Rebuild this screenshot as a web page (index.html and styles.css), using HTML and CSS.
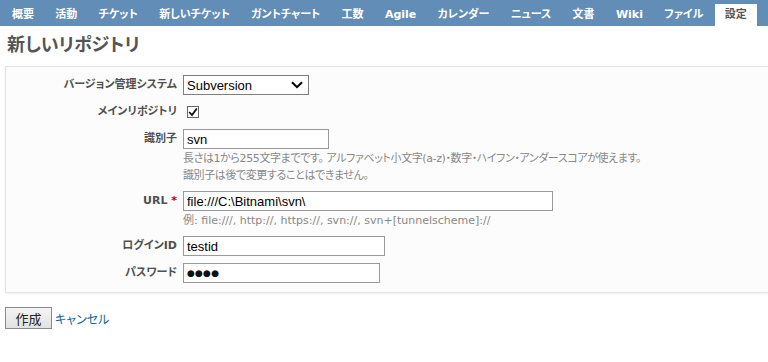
FILE: index.html
```html
<!DOCTYPE html>
<html lang="ja">
<head>
<meta charset="utf-8">
<title>新しいリポジトリ</title>
<link rel="stylesheet" href="styles.css">
</head>
<body>
<div class="main-menu">
  <ul class="tabs">
    <li><a href="#">概要</a></li>
    <li><a href="#">活動</a></li>
    <li><a href="#">チケット</a></li>
    <li><a href="#">新しいチケット</a></li>
    <li><a href="#">ガントチャート</a></li>
    <li><a href="#">工数</a></li>
    <li><a href="#">Agile</a></li>
    <li><a href="#">カレンダー</a></li>
    <li><a href="#">ニュース</a></li>
    <li><a href="#">文書</a></li>
    <li><a href="#">Wiki</a></li>
    <li><a href="#">ファイル</a></li>
    <li class="selected"><a href="#">設定</a></li>
  </ul>
</div>
<div class="content">
  <h2 class="title">新しいリポジトリ</h2>
  <form class="repo-form">
    <div class="box">
      <div class="row">
        <label class="label">バージョン管理システム</label>
        <div class="field">
          <div class="select">
            <span class="select-value">Subversion</span>
            <svg class="chevron" width="12" height="8" viewBox="0 0 12 8"><path d="M1 1.2 L6 6.2 L11 1.2" fill="none" stroke="#000" stroke-width="2"/></svg>
          </div>
        </div>
      </div>
      <div class="row">
        <label class="label">メインリポジトリ</label>
        <div class="field">
          <span class="checkbox"><svg width="10" height="10" viewBox="0 0 10 10"><path d="M1.2 5 L4 8 L8.8 1.5" fill="none" stroke="#111" stroke-width="1.8"/></svg></span>
        </div>
      </div>
      <div class="row">
        <label class="label">識別子</label>
        <div class="field">
          <input class="text w-ident" type="text" value="svn">
          <p class="info info-ja">長さは1から255文字までです。 アルファベット小文字(a-z)・数字・ハイフン・アンダースコアが使えます。</p>
          <p class="info info-ja">識別子は後で変更することはできません。</p>
        </div>
      </div>
      <div class="row">
        <label class="label">URL <span class="required">*</span></label>
        <div class="field">
          <input class="text w-url" type="text" value="file:///C:\Bitnami\svn\">
          <p class="info">例: file:///, http://, https://, svn://, svn+[tunnelscheme]://</p>
        </div>
      </div>
      <div class="row">
        <label class="label">ログインID</label>
        <div class="field">
          <input class="text w-login" type="text" value="testid">
        </div>
      </div>
      <div class="row">
        <label class="label">パスワード</label>
        <div class="field">
          <div class="text w-pass"><span class="dots">●●●●</span></div>
        </div>
      </div>
    </div>
    <div class="actions">
      <button class="btn" type="button">作成</button>
      <a class="cancel" href="#">キャンセル</a>
    </div>
  </form>
</div>
</body>
</html>
```
FILE: styles.css
```css
html, body {
  margin: 0;
  padding: 0;
  background: #fff;
  overflow: hidden;
}
body {
  font-family: "DejaVu Sans", "Noto Sans CJK JP", sans-serif;
  font-size: 11px;
  color: #333;
  font-feature-settings: "palt" 1;
}
.main-menu {
  height: 26px;
  background: #628db6;
}
.tabs {
  list-style: none;
  margin: 0;
  padding: 4px 0 0 2px;
  display: flex;
  height: 22px;
}
.tabs li {
  margin-right: 1.3px;
}
.tabs a {
  display: block;
  height: 22px;
  line-height: 22px;
  padding: 0 10px;
  color: #fff;
  font-weight: bold;
  font-size: 11px;
  text-decoration: none;
  white-space: nowrap;
}
.tabs li.selected a {
  background: #fff;
  color: #555;
}
.content {
  padding: 0 0 0 5px;
}
.title {
  margin: 8px 0 10px 2px;
  height: 22px;
  line-height: 22px;
  font-size: 18px;
  font-weight: bold;
  color: #555;
}
.box {
  border: 1px solid #e4e4e4;
  border-right: none;
  background: #fcfcfc;
  padding: 8px 0 9px 0;
  box-shadow: 0 1px 2px rgba(0,0,0,0.07);
  display: flex;
  flex-direction: column;
  gap: 7px;
}
.row {
  display: flex;
  align-items: flex-start;
}
.label {
  flex: 0 0 171px;
  margin-right: 6px;
  text-align: right;
  font-weight: bold;
  color: #505050;
  line-height: 20px;
  height: 20px;
  white-space: nowrap;
}
.required {
  color: #bb0000;
}
.field {
  flex: 1;
  min-height: 20px;
}
.select {
  box-sizing: border-box;
  width: 126px;
  height: 20px;
  border: 1px solid #7f7f7f;
  background: #fff;
  display: flex;
  align-items: center;
  justify-content: space-between;
  padding: 0 5px 0 3px;
}
.select-value {
  font-family: "Liberation Sans", Arial, sans-serif;
  font-size: 13px;
  color: #000;
}
.checkbox {
  box-sizing: border-box;
  display: flex;
  align-items: center;
  justify-content: center;
  width: 12px;
  height: 12px;
  margin: 4px 0 0 4px;
  border: 1px solid #666;
  background: #fff;
}
.text {
  box-sizing: border-box;
  display: block;
  height: 20px;
  margin: 0;
  padding: 0 3px;
  border: 1px solid #999;
  background: #fff;
  font-family: "Liberation Sans", Arial, sans-serif;
  font-size: 13px;
  color: #000;
  outline: none;
}
.w-ident { width: 146px; }
.w-url { width: 370px; }
.w-login { width: 202px; }
.w-pass {
  width: 197px;
  display: flex;
  align-items: center;
}
.dots {
  font-family: "DejaVu Sans", sans-serif;
  font-size: 9px;
  line-height: 1;
  color: #111;
  letter-spacing: 0.2px;
}
.info {
  margin: 1px 0 0 0;
  line-height: 17px;
  font-size: 11px;
  color: #888;
  white-space: nowrap;
}
.info-ja {
  letter-spacing: -0.4px;
}
.info + .info {
  margin-top: 0;
}
.actions {
  display: flex;
  align-items: center;
  margin-top: 14px;
}
.btn {
  box-sizing: border-box;
  width: 47px;
  height: 22px;
  padding: 0;
  border: 1px solid #8a8a8a;
  background: linear-gradient(#f4f4f4, #e2e2e2);
  font-family: "Noto Sans CJK JP", sans-serif;
  font-size: 13px;
  color: #222;
}
.cancel {
  margin-left: 3px;
  color: #169;
  text-decoration: none;
  font-size: 12px;
}
```
